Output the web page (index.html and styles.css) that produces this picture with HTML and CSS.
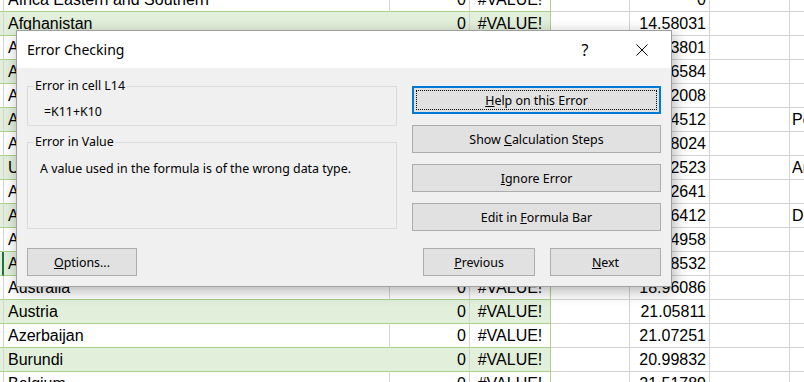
FILE: index.html
```html
<!DOCTYPE html>
<html lang="en">
<head>
  <meta charset="UTF-8" />
  <title>Error Checking</title>
  <link rel="stylesheet" href="styles.css">
</head>
<body>
  <div class="sheet" id="sheet"></div>

  <div class="dialog">
    <div class="titlebar">
      <span class="title">Error Checking</span>
      <span class="tbBtn helpBtn">?</span>
      <span class="tbBtn closeBtn">
        <svg width="12" height="12" viewBox="0 0 12 12">
          <path d="M0.5 0.5 L11.5 11.5 M11.5 0.5 L0.5 11.5" stroke="#000" stroke-width="1" fill="none"/>
        </svg>
      </span>
    </div>
    <div class="dlgBody">
      <div class="dlgMain">
        <div class="groups">
          <div class="group cellGroup">
            <div class="groupTitle">Error in cell L14</div>
            <div class="formula">=K11+K10</div>
          </div>
          <div class="group valueGroup">
            <div class="groupTitle">Error in Value</div>
            <div class="desc">A value used in the formula is of the wrong data type.</div>
          </div>
        </div>
        <div class="actions">
          <button class="btn focused"><u>H</u>elp on this Error</button>
          <button class="btn">Show <u>C</u>alculation Steps</button>
          <button class="btn"><u>I</u>gnore Error</button>
          <button class="btn">Edit in <u>F</u>ormula Bar</button>
        </div>
      </div>
      <div class="dlgFoot">
        <button class="btn optionsBtn"><u>O</u>ptions...</button>
        <span class="spacer"></span>
        <button class="btn prevBtn"><u>P</u>revious</button>
        <button class="btn nextBtn"><u>N</u>ext</button>
      </div>
    </div>
  </div>

  <script>
    const rows = [
      ['Africa Eastern and Southern', '0', ''],
      ['Afghanistan', '14.58031', ''],
      ['Africa Western and Central', '17.43801', ''],
      ['Angola', '19.16584', ''],
      ['Albania', '20.12008', ''],
      ['Andorra', '20.54512', 'Population'],
      ['Arab World', '18.28024', ''],
      ['United Arab Emirates', '21.42523', 'Area'],
      ['Argentina', '20.72641', ''],
      ['Armenia', '19.86412', 'Density'],
      ['American Samoa', '18.04958', ''],
      ['Antigua and Barbuda', '19.58532', ''],
      ['Australia', '18.96086', ''],
      ['Austria', '21.05811', ''],
      ['Azerbaijan', '21.07251', ''],
      ['Burundi', '20.99832', ''],
      ['Belgium', '21.51789', '']
    ];

    const sheet = document.getElementById('sheet');
    rows.forEach((r, i) => {
      const row = document.createElement('div');
      row.className = 'row' + (i % 2 === 1 ? ' band' : '') + (i === 11 ? ' current' : '');
      row.innerHTML = `
        <div class="c t c0"></div>
        <div class="c t cName">${r[0]}</div>
        <div class="c t cNum">0</div>
        <div class="c t cErr">#VALUE!</div>
        <div class="c"></div>
        <div class="c cNum">${r[1]}</div>
        <div class="c"></div>
        <div class="c cText">${r[2]}</div>
      `;
      sheet.appendChild(row);
    });
  </script>
</body>
</html>
```

FILE: styles.css
```css
* {
  box-sizing: border-box;
}

body {
  margin: 0;
  width: 804px;
  height: 382px;
  overflow: hidden;
  position: relative;
  background-color: #fff;
}

.sheet {
  margin-top: -12px;
  font-family: 'Liberation Sans', Arial, sans-serif;
  font-size: 16px;
  color: #000;
}

.row {
  display: grid;
  grid-template-columns: 4px 386px 80px 81px 79px 80px 80px 140px;
  height: 24px;
}

.c {
  border-right: 1px solid #d4d4d4;
  border-bottom: 1px solid #d4d4d4;
  line-height: 23px;
  white-space: nowrap;
  overflow: hidden;
}

.c.t {
  border-bottom-color: #a9d08e;
}

.band .c.t {
  background-color: #e2efda;
}

.band .cName {
  border-right-color: #e2efda;
}

.cName {
  padding-left: 4px;
}

.cNum {
  text-align: right;
  padding-right: 3px;
}

.cErr {
  text-align: center;
  border-right-color: #a9d08e;
}

.cText {
  padding-left: 2px;
}

.current .c0 {
  border-right: 2px solid #217346;
}

/* dialog */

.dialog {
  position: absolute;
  left: 16px;
  top: 30px;
  width: 656px;
  height: 257px;
  border: 1px solid #a0a0a0;
  background-color: #f0f0f0;
  box-shadow: 2px 4px 14px rgba(0,0,0,0.3);
  font-family: 'Noto Sans', 'Open Sans', sans-serif;
  font-size: 12.4px;
  color: #000;
}

.titlebar {
  height: 37px;
  background-color: #fff;
  display: flex;
  align-items: center;
}

.title {
  flex: 1;
  padding-left: 10px;
  font-size: 14px;
}

.tbBtn {
  display: flex;
  justify-content: center;
  align-items: center;
  height: 100%;
}

.helpBtn {
  width: 56px;
  font-size: 16px;
}

.closeBtn {
  width: 58px;
}

.dlgBody {
  padding: 18px 10px 0 10px;
}

.dlgMain {
  display: flex;
  gap: 15px;
  height: 145px;
}

.groups {
  width: 370px;
}

.group {
  border: 1px solid #dcdcdc;
}

.cellGroup {
  height: 40px;
}

.valueGroup {
  height: 87px;
  margin-top: 16px;
}

.groupTitle {
  width: fit-content;
  margin: -9px 0 0 6px;
  padding: 0 1px;
  line-height: 16px;
  background-color: #f0f0f0;
}

.formula {
  margin-top: 10px;
  padding-left: 16px;
  line-height: 16px;
}

.desc {
  margin-top: 11px;
  padding-left: 12px;
  line-height: 16px;
}

.actions {
  width: 249px;
  display: flex;
  flex-direction: column;
  gap: 11px;
}

.btn {
  height: 28px;
  margin: 0;
  padding: 0;
  border: 1px solid #adadad;
  background-color: #e1e1e1;
  font-family: 'Noto Sans', 'Open Sans', sans-serif;
  font-size: 12.4px;
  color: #000;
}

.btn.focused {
  border: 2px solid #0078d7;
  outline: 1px dotted #000;
  outline-offset: -5px;
}

.dlgFoot {
  margin-top: 17px;
  display: flex;
  gap: 15px;
}

.spacer {
  flex: 1;
}

.optionsBtn {
  width: 110px;
}

.prevBtn {
  width: 112px;
}

.nextBtn {
  width: 111px;
}
```
